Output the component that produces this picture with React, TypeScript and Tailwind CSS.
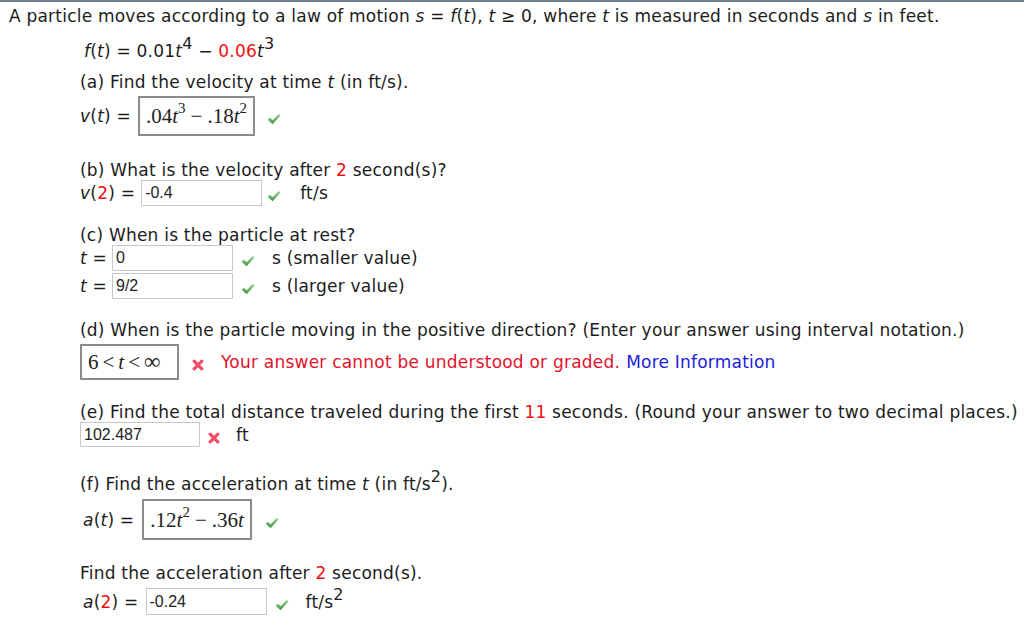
import React from "react";

/* ─── small marks ─── */

function Check() {
  return (
    <svg width="14" height="12" viewBox="0 0 14 12" className="inline-block shrink-0">
      <defs>
        <linearGradient id="chk" x1="0" y1="0" x2="0" y2="1">
          <stop offset="0" stopColor="#9bd59b" />
          <stop offset="1" stopColor="#3d963d" />
        </linearGradient>
      </defs>
      <path d="M0.6 6.8 L3 4.8 L5.6 7.3 L11.6 0.9 L13.6 2.6 L5.6 11.2 Z" fill="url(#chk)" />
    </svg>
  );
}

function Cross() {
  return (
    <svg width="12" height="12" viewBox="0 0 12 12" className="inline-block shrink-0">
      <path d="M2.2 2.2 L9.8 9.8 M9.8 2.2 L2.2 9.8" stroke="#ef4d66" strokeWidth="3.2" strokeLinecap="round" />
    </svg>
  );
}

function Field({ value, w }: { value: string; w: string }) {
  return (
    <span
      className={`flex h-full items-center border border-[#c8c8c8] bg-white pl-[3px] font-['Liberation_Sans',Arial,sans-serif] text-[16px] tracking-normal text-[#222] ${w}`}
    >
      {value}
    </span>
  );
}

const Red = ({ children }: { children: React.ReactNode }) => (
  <span className="text-[#f01010]">{children}</span>
);

const Sup = ({ children }: { children: React.ReactNode }) => (
  <sup className="relative -top-[8px] align-baseline text-[16px]">{children}</sup>
);

const mathBox =
  "flex h-full items-center border-2 border-[#8c8c8c] bg-white px-[6px] font-['Liberation_Serif','Times_New_Roman',serif] text-[21px] tracking-normal text-[#222]";

/* ─── page ─── */

export default function App() {
  return (
    <div className="min-h-screen w-[1024px] overflow-hidden bg-white font-['DejaVu_Sans',Verdana,sans-serif] text-[17px] leading-[20px] tracking-[0.22px] text-[#1c1c1c]">
      <div className="h-[2px] bg-[#6c808e]" />

      <p className="mt-[4px] whitespace-nowrap pl-[9px]">
        A particle moves according to a law of motion <i>s</i> = <i>f</i>(<i>t</i>), <i>t</i> ≥ 0, where{" "}
        <i>t</i> is measured in seconds and <i>s</i> in feet.
      </p>

      <div className="pl-[80px]">
        <p className="mt-[15px] pl-[4px]">
          <i>f</i>(<i>t</i>) = 0.01<i>t</i>
          <Sup>4</Sup> − <Red>0.06</Red>
          <i>t</i>
          <Sup>3</Sup>
        </p>

        {/* (a) */}
        <p className="mt-[11px]">
          (a) Find the velocity at time <i>t</i> (in ft/s).
        </p>
        <div className="mt-[4px] flex h-[40px] items-center">
          <span>
            <i>v</i>(<i>t</i>) =
          </span>
          <span className={`${mathBox} ml-[7px]`}>
            .04<i>t</i>
            <sup className="relative -top-[8px] align-baseline text-[15px]">3</sup>
            <span className="mx-[5px]">−</span>.18<i>t</i>
            <sup className="relative -top-[8px] align-baseline text-[15px]">2</sup>
          </span>
          <span className="ml-[12px] mt-[4px]">
            <Check />
          </span>
        </div>

        {/* (b) */}
        <p className="mt-[24px]">
          (b) What is the velocity after <Red>2</Red> second(s)?
        </p>
        <div className="flex h-[26px] items-center">
          <span>
            <i>v</i>(<Red>2</Red>) =
          </span>
          <span className="ml-[6px] h-full">
            <Field value="-0.4" w="w-[121px]" />
          </span>
          <span className="ml-[5px] mt-[4px]">
            <Check />
          </span>
          <span className="ml-[19px]">ft/s</span>
        </div>

        {/* (c) */}
        <p className="mt-[19px]">(c) When is the particle at rest?</p>
        <div className="mt-[0px] flex h-[26px] items-center">
          <span>
            <i>t</i> =
          </span>
          <span className="ml-[5px] h-full">
            <Field value="0" w="w-[121px]" />
          </span>
          <span className="ml-[8px] mt-[4px]">
            <Check />
          </span>
          <span className="ml-[17px]">s (smaller value)</span>
        </div>
        <div className="mt-[2px] flex h-[26px] items-center">
          <span>
            <i>t</i> =
          </span>
          <span className="ml-[5px] h-full">
            <Field value="9/2" w="w-[121px]" />
          </span>
          <span className="ml-[8px] mt-[4px]">
            <Check />
          </span>
          <span className="ml-[17px]">s (larger value)</span>
        </div>

        {/* (d) */}
        <p className="mt-[21px] whitespace-nowrap">
          (d) When is the particle moving in the positive direction? (Enter your answer using interval notation.)
        </p>
        <div className="mt-[4px] flex h-[36px] items-center whitespace-nowrap">
          <span className={`${mathBox} w-[99px]`}>
            6<span className="mx-[4px]">&lt;</span>
            <i>t</i>
            <span className="mx-[4px]">&lt;</span>
            <span className="text-[23px]">∞</span>
          </span>
          <span className="ml-[13px] mt-[3px]">
            <Cross />
          </span>
          <span className="ml-[17px] text-[#e3122c]">Your answer cannot be understood or graded.</span>
          <span className="ml-[6px] text-[#2020dc]">More Information</span>
        </div>

        {/* (e) */}
        <p className="mt-[22px] whitespace-nowrap">
          (e) Find the total distance traveled during the first <Red>11</Red> seconds. (Round your answer to two
          decimal places.)
        </p>
        <div className="flex h-[25px] items-center">
          <span className="h-full">
            <Field value="102.487" w="w-[120px]" />
          </span>
          <span className="ml-[8px] mt-[4px]">
            <Cross />
          </span>
          <span className="ml-[16px]">ft</span>
        </div>

        {/* (f) */}
        <p className="mt-[27px]">
          (f) Find the acceleration at time <i>t</i> (in ft/s
          <Sup>2</Sup>).
        </p>
        <div className="mt-[5px] flex h-[41px] items-center pl-[3px]">
          <span>
            <i>a</i>(<i>t</i>) =
          </span>
          <span className={`${mathBox} ml-[8px]`}>
            .12<i>t</i>
            <sup className="relative -top-[8px] align-baseline text-[15px]">2</sup>
            <span className="mx-[5px]">−</span>.36<i>t</i>
          </span>
          <span className="ml-[13px] mt-[4px]">
            <Check />
          </span>
        </div>

        <p className="mt-[23px]">
          Find the acceleration after <Red>2</Red> second(s).
        </p>
        <div className="mt-[5px] flex h-[27px] items-center pl-[3px]">
          <span>
            <i>a</i>(<Red>2</Red>) =
          </span>
          <span className="ml-[7px] h-full">
            <Field value="-0.24" w="w-[121px]" />
          </span>
          <span className="ml-[8px] mt-[4px]">
            <Check />
          </span>
          <span className="ml-[17px]">
            ft/s<Sup>2</Sup>
          </span>
        </div>
      </div>
    </div>
  );
}
